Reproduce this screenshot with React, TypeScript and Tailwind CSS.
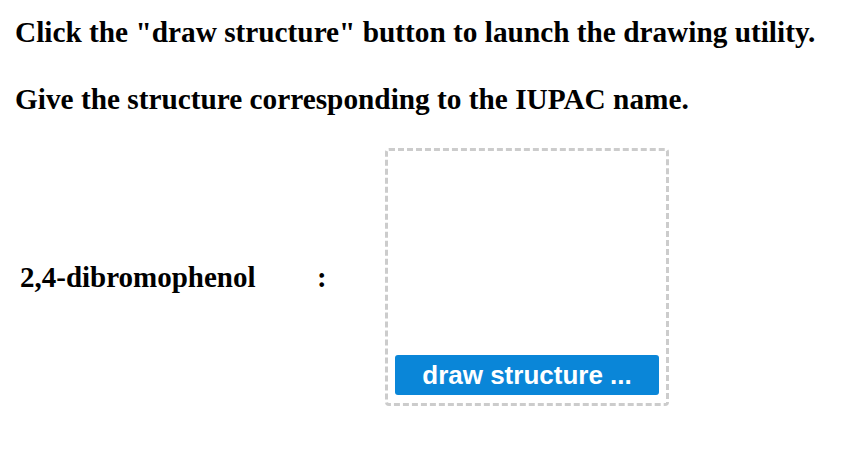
import React from 'react';

function App() {
  return (
    <div className="min-h-screen bg-white text-black font-['Liberation_Serif',serif]">
      <div className="px-[15px] pt-[16px]">
        <p className="text-[29.3px] font-bold leading-[33px]">
          Click the "draw structure" button to launch the drawing utility.
        </p>
        <p className="mt-[34px] text-[29.3px] font-bold leading-[33px]">
          Give the structure corresponding to the IUPAC name.
        </p>
        <div className="mt-[32px] flex items-center">
          <span className="ml-[5px] w-[297px] text-[29px] font-bold leading-[33px]">2,4-dibromophenol</span>
          <span className="w-[68px] text-[29px] font-bold leading-[33px]">:</span>
          <div className="flex h-[258px] w-[284px] flex-col justify-end rounded-[4px] border-[3px] border-dashed border-[#cccccc] px-[7px] pb-[8px]">
            <button className="h-[40px] w-full rounded-[3px] bg-[#0a86d8] font-['Liberation_Sans',Arial,sans-serif] text-[26px] font-bold leading-[40px] text-white">
              draw structure ...
            </button>
          </div>
        </div>
      </div>
    </div>
  );
}

export default App;
